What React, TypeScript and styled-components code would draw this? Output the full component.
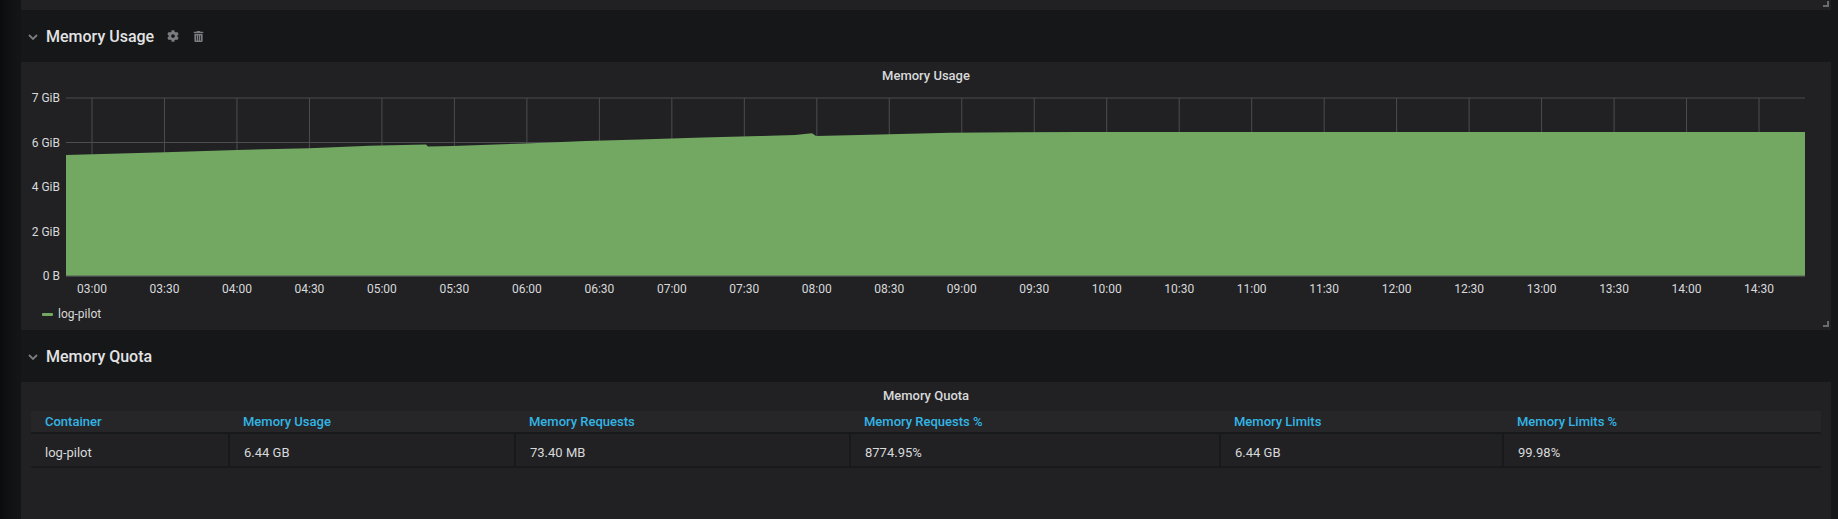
import styled, { createGlobalStyle } from "styled-components";
import { FaCog, FaTrashAlt } from "react-icons/fa";

const GlobalStyle = createGlobalStyle`
  html, body {
    margin: 0;
    padding: 0;
    overflow: hidden;
    background: #161719;
  }
  body {
    font-family: Roboto, "Liberation Sans", sans-serif;
    color: #d8d9da;
  }
`;

const Layout = styled.div`
  display: flex;
  height: 519px;
  overflow: hidden;
`;

const SideShadow = styled.div`
  width: 21px;
  flex: none;
  background: linear-gradient(to right, #0b0c0d 0, #101113 8px, #141517 21px);
`;

const Main = styled.div`
  flex: 1;
  display: flex;
  flex-direction: column;
  padding-right: 7px;
`;

const Panel = styled.div<{ $height: number }>`
  position: relative;
  height: ${({ $height }) => $height}px;
  background: #212124;
  display: flex;
  flex-direction: column;
  flex: none;
`;

const ResizeHandle = styled.div`
  position: absolute;
  right: 2px;
  bottom: 3px;
  width: 4px;
  height: 4px;
  border-right: 2px solid #6b6c70;
  border-bottom: 2px solid #6b6c70;
`;

const RowHeader = styled.div`
  height: 52px;
  flex: none;
  display: flex;
  align-items: center;
  padding-left: 7px;
`;

const Chevron = styled.svg`
  width: 10px;
  height: 7px;
  margin-right: 8px;
  margin-top: 2px;
`;

const RowTitle = styled.span`
  font-size: 16px;
  font-weight: 500;
  color: #e3e3e4;
  margin-right: 13px;
`;

const RowAction = styled.span`
  display: flex;
  align-items: center;
  color: #7b7c80;
  margin-right: 14px;
`;

const PanelTitle = styled.div`
  padding-top: 6px;
  height: 16px;
  line-height: 16px;
  font-size: 13px;
  font-weight: 500;
  text-align: center;
  color: #d8d9da;
`;

const GraphBox = styled.div`
  margin-top: 2px;
  height: 214px;
`;

const Legend = styled.div`
  margin-top: 4px;
  height: 20px;
  display: flex;
  align-items: center;
  padding-left: 21px;
  font-size: 12px;
  color: #d8d9da;
`;

const LegendMark = styled.span<{ $color: string }>`
  width: 11px;
  height: 3px;
  border-radius: 1px;
  background: ${({ $color }) => $color};
  margin-right: 5px;
`;

const TableWrap = styled.div`
  padding: 7px 10px 0;
`;

const Table = styled.table`
  width: 100%;
  border-collapse: collapse;
  table-layout: fixed;
  font-size: 13px;
`;

const Th = styled.th`
  height: 21px;
  padding: 0 14px;
  background: #262628;
  color: #33b5e5;
  font-weight: 500;
  text-align: left;
  border-bottom: 2px solid #18191b;
  white-space: nowrap;
`;

const Td = styled.td`
  padding: 11px 14px 5px;
  line-height: 16px;
  color: #d8d9da;
  border-bottom: 2px solid #18191b;
  border-left: 2px solid #18191b;
  &:first-child {
    border-left: none;
  }
`;

const GREEN = "#73a862";

const times = Array.from({ length: 24 }, (_, i) => {
  const m = 180 + i * 30;
  const h = Math.floor(m / 60);
  return `${String(h).padStart(2, "0")}:${m % 60 === 0 ? "00" : "30"}`;
});

const yTicks = [
  { y: 12, label: "7 GiB" },
  { y: 56.5, label: "6 GiB" },
  { y: 101, label: "4 GiB" },
  { y: 145.5, label: "2 GiB" },
  { y: 190, label: "0 B" },
];

// top edge of the usage series, in graph coordinates
const series: [number, number][] = [
  [45, 69], [144, 66.3], [216, 64], [288, 62.3], [349, 59.7], [405, 58.5],
  [407, 60.5], [432, 60], [504, 57.5], [565, 55], [619, 53.5], [682, 51.5],
  [739, 50], [774, 49], [791, 47.3], [795, 50], [859, 48.5], [929, 46.7],
  [1059, 46], [1784, 46],
];

const PLOT_LEFT = 45;
const PLOT_RIGHT = 1784;
const ZERO_Y = 190;

const MemoryGraph = () => {
  const area =
    "M" +
    series.map(([x, y]) => `${x},${y}`).join(" L") +
    ` L${PLOT_RIGHT},${ZERO_Y} L${PLOT_LEFT},${ZERO_Y} Z`;

  return (
    <svg width="100%" height="214" viewBox="0 0 1810 214">
      {yTicks.map((t) => (
        <g key={t.label}>
          <line x1={PLOT_LEFT} x2={PLOT_RIGHT} y1={t.y} y2={t.y} stroke="#4c4d51" strokeWidth="1" />
          <text
            x="39"
            y={t.y + 4}
            textAnchor="end"
            fontSize="12"
            fill="#d8d9da"
            fontFamily="Roboto, 'Liberation Sans', sans-serif"
          >
            {t.label}
          </text>
        </g>
      ))}
      {times.map((t, i) => {
        const x = 71 + i * 72.48;
        return (
          <g key={t}>
            <line x1={x} x2={x} y1={12} y2={ZERO_Y} stroke="#4c4d51" strokeWidth="1" />
            <text
              x={x}
              y="207"
              textAnchor="middle"
              fontSize="12"
              fill="#d8d9da"
              fontFamily="Roboto, 'Liberation Sans', sans-serif"
            >
              {t}
            </text>
          </g>
        );
      })}
      <path d={area} fill={GREEN} />
      <line x1={PLOT_LEFT} x2={PLOT_RIGHT} y1={ZERO_Y} y2={ZERO_Y} stroke="#55565a" strokeWidth="1" />
    </svg>
  );
};

const columns = [
  { title: "Container", width: 198 },
  { title: "Memory Usage", width: 286 },
  { title: "Memory Requests", width: 335 },
  { title: "Memory Requests %", width: 370 },
  { title: "Memory Limits", width: 283 },
  { title: "Memory Limits %", width: 318 },
];

const rows = [["log-pilot", "6.44 GB", "73.40 MB", "8774.95%", "6.44 GB", "99.98%"]];

const Row = ({ title, actions }: { title: string; actions?: boolean }) => (
  <RowHeader>
    <Chevron viewBox="0 0 10 7">
      <polyline points="1,1 5,5 9,1" fill="none" stroke="#7b7c80" strokeWidth="1.8" />
    </Chevron>
    <RowTitle>{title}</RowTitle>
    {actions && (
      <>
        <RowAction>
          <FaCog size={12} />
        </RowAction>
        <RowAction>
          <FaTrashAlt size={11} />
        </RowAction>
      </>
    )}
  </RowHeader>
);

const App = () => (
  <>
    <GlobalStyle />
    <Layout>
      <SideShadow />
      <Main>
        <Panel $height={10}>
          <ResizeHandle />
        </Panel>

        <Row title="Memory Usage" actions />
        <Panel $height={268}>
          <PanelTitle>Memory Usage</PanelTitle>
          <GraphBox>
            <MemoryGraph />
          </GraphBox>
          <Legend>
            <LegendMark $color={GREEN} />
            log-pilot
          </Legend>
          <ResizeHandle />
        </Panel>

        <Row title="Memory Quota" />
        <Panel $height={137}>
          <PanelTitle>Memory Quota</PanelTitle>
          <TableWrap>
            <Table>
              <colgroup>
                {columns.map((c) => (
                  <col key={c.title} style={{ width: c.width }} />
                ))}
              </colgroup>
              <thead>
                <tr>
                  {columns.map((c) => (
                    <Th key={c.title}>{c.title}</Th>
                  ))}
                </tr>
              </thead>
              <tbody>
                {rows.map((r) => (
                  <tr key={r[0]}>
                    {r.map((v, i) => (
                      <Td key={i}>{v}</Td>
                    ))}
                  </tr>
                ))}
              </tbody>
            </Table>
          </TableWrap>
        </Panel>
      </Main>
    </Layout>
  </>
);

export default App;
